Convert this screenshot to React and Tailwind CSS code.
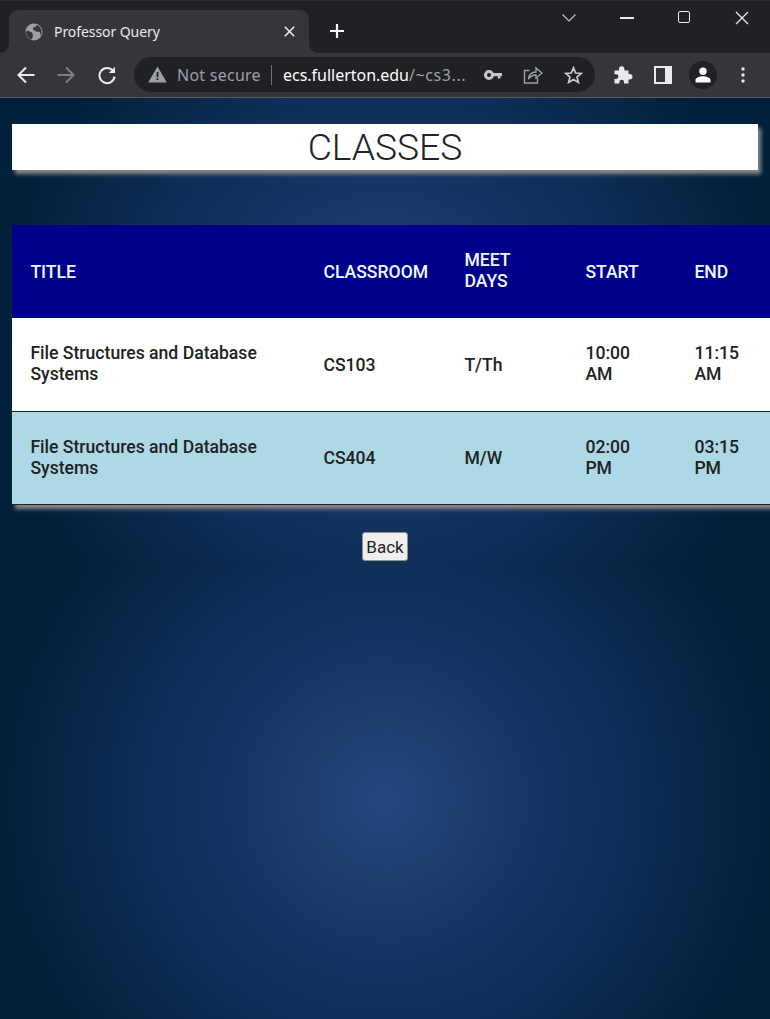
import React from "react";

const Globe = () => (
  <svg width="18" height="18" viewBox="0 0 18 18">
    <circle cx="9" cy="9" r="8.5" fill="#9aa0a6" />
    <path d="M2.5 7.5 L7 9.5 L8 12 L7 16.5 A8 8 0 0 1 1 9 Z M12 2 L9.5 4.5 L8 4.5 L8 6.5 L11 8.5 L15 9 L15.5 13 A8 8 0 0 0 16.5 7 A8 8 0 0 0 12 2 Z" fill="#35363a" />
  </svg>
);

const Arrow = ({ color, flip }) => (
  <svg width="20" height="20" viewBox="0 0 20 20" fill="none" stroke={color} strokeWidth="2.1" className={flip ? "rotate-180" : ""}>
    <path d="M18.5 10 H2.5 M10 2.5 L2.5 10 L10 17.5" />
  </svg>
);

const Reload = () => (
  <svg width="20" height="20" viewBox="0 0 20 20" fill="none">
    <path d="M16.2 6 A7.6 7.6 0 1 0 17.6 11.5" stroke="#e8eaed" strokeWidth="2" />
    <path d="M18 1.8 V8 H11.8 Z" fill="#e8eaed" />
  </svg>
);

const Warn = () => (
  <svg width="19" height="17" viewBox="0 0 19 17">
    <path d="M9.5 0.5 L18.8 16.5 H0.2 Z" fill="#9aa0a6" />
    <path d="M8.6 6 H10.4 V11 H8.6 Z M8.6 12.3 H10.4 V14.1 H8.6 Z" fill="#202124" />
  </svg>
);

const Key = () => (
  <svg width="18" height="10" viewBox="0 0 18 10">
    <path d="M5 0 A5 5 0 1 1 5 10 A5 5 0 0 1 5 0 Z M5 3 A2 2 0 1 0 5 7 A2 2 0 0 0 5 3 Z" fill="#c4c7c9" fillRule="evenodd" />
    <path d="M8 3 H18 V6.2 H16.4 V8.6 H13.8 V6.2 H8 Z" fill="#c4c7c9" />
  </svg>
);

const Share = () => (
  <svg width="20" height="20" viewBox="0 0 20 20" fill="none" stroke="#9aa0a6" strokeWidth="1.4">
    <path d="M6.5 5.5 H1.5 V18 H14.5 V13" />
    <path d="M5.5 14 C6 9 9 7 13 7 V3 L19 8 L13 13 V10 C10 10 7.5 11 5.5 14 Z" />
  </svg>
);

const Star = () => (
  <svg width="19" height="18" viewBox="0 0 19 18" fill="none" stroke="#c9cbce" strokeWidth="1.7">
    <path d="M9.5 1.8 L11.7 7 L17.3 7.4 L13 11 L14.4 16.4 L9.5 13.5 L4.6 16.4 L6 11 L1.7 7.4 L7.3 7 Z" />
  </svg>
);

const Puzzle = () => (
  <svg width="20" height="19" viewBox="0 0 20 19">
    <path d="M1.5 5.5 H6 V4 A2.7 2.7 0 0 1 11.4 4 V5.5 H15.5 V9 H16.8 A2.7 2.7 0 0 1 16.8 14.4 H15.5 V18.5 H11 V17 A2.3 2.3 0 0 0 6.4 17 V18.5 H1.5 V14 H3 A2.4 2.4 0 0 0 3 9.2 H1.5 Z" fill="#e8eaed" />
  </svg>
);

const SidePanel = () => (
  <svg width="18" height="18" viewBox="0 0 18 18">
    <path d="M0 0 H18 V18 H0 Z M2 2 V16 H11 V2 Z" fill="#e8eaed" fillRule="evenodd" />
  </svg>
);

const Person = () => (
  <svg width="16" height="16" viewBox="0 0 16 16">
    <circle cx="8" cy="4.2" r="3.7" fill="#fff" />
    <path d="M0.5 15.5 V13 C0.5 10.5 5 9.3 8 9.3 C11 9.3 15.5 10.5 15.5 13 V15.5 Z" fill="#fff" />
  </svg>
);

const Dots = () => (
  <svg width="4" height="16" viewBox="0 0 4 16">
    <circle cx="2" cy="2" r="1.7" fill="#e8eaed" />
    <circle cx="2" cy="8" r="1.7" fill="#e8eaed" />
    <circle cx="2" cy="14" r="1.7" fill="#e8eaed" />
  </svg>
);

const Cross = ({ size, color, width }) => (
  <svg width={size} height={size} viewBox="0 0 14 14" fill="none" stroke={color} strokeWidth={width}>
    <path d="M1 1 L13 13 M13 1 L1 13" />
  </svg>
);

const Flare = ({ right }) => (
  <svg width="9" height="9" viewBox="0 0 9 9" className={right ? "absolute bottom-0 -right-[9px] -scale-x-100" : "absolute bottom-0 -left-[9px]"}>
    <path d="M9 0 V9 H0 A9 9 0 0 0 9 0 Z" fill="#35363a" />
  </svg>
);

const TabStrip = () => (
  <div className="flex h-[53px] shrink-0 bg-[#202124] shadow-[inset_0_1px_0_#2c2d30]">
    <div className="relative ml-[9px] mt-[10px] flex h-[43px] w-[300px] items-center rounded-t-[9px] bg-[#35363a] pl-[16px] pr-[14px]">
      <Flare />
      <Flare right />
      <Globe />
      <span className="ml-[11px] text-[14px] tracking-[-0.07px] text-[#e8eaed] font-['Noto_Sans',sans-serif]">Professor Query</span>
      <span className="ml-auto flex"><Cross size={11} color="#e8eaed" width={2} /></span>
    </div>
    <div className="ml-[21px] mt-[24px] h-[14px] w-[14px] flex">
      <svg width="14" height="14" viewBox="0 0 14 14" fill="none" stroke="#fff" strokeWidth="2.2"><path d="M7 0 V14 M0 7 H14" /></svg>
    </div>
    <div className="ml-auto flex items-start">
      <div className="mt-[14px] flex">
        <svg width="14" height="8" viewBox="0 0 14 8" fill="none" stroke="#c4c7c9" strokeWidth="1.1"><path d="M0.5 0.5 L7 7 L13.5 0.5" /></svg>
      </div>
      <div className="ml-[44px] mt-[17px] h-[1.5px] w-[14px] bg-[#e8eaed]" />
      <div className="ml-[44px] mt-[11px] h-[12px] w-[12px] rounded-[2px] border border-[#e8eaed]" />
      <div className="ml-[45px] mr-[21px] mt-[11px] flex"><Cross size={14} color="#e8eaed" width={1.3} /></div>
    </div>
  </div>
);

const IconSlot = ({ children, w = "w-10" }) => (
  <div className={`flex h-full items-center justify-center ${w}`}>{children}</div>
);

const Toolbar = () => (
  <div className="flex h-[45px] shrink-0 items-center border-b border-b-[#5a5b5e] bg-[#35363a] pl-[6px] pb-[1px]">
    <IconSlot><Arrow color="#e8eaed" /></IconSlot>
    <IconSlot><Arrow color="#7c7e81" flip /></IconSlot>
    <div className="flex h-full w-10 items-center justify-center pl-[1px]"><Reload /></div>
    <div className="ml-[8px] flex h-[35px] w-[461px] items-center rounded-full bg-[#202124] pl-[14px] font-['Noto_Sans',sans-serif] text-[16px]">
      <Warn />
      <span className="ml-[10px] w-[84px] whitespace-nowrap tracking-[0.25px] text-[#9aa0a6]">Not secure</span>
      <span className="ml-[10px] h-[20px] w-px bg-[#6f7276]" />
      <span className="ml-[11px] w-[184px] whitespace-nowrap tracking-[-0.02px] text-white">
        ecs.fullerton.edu<span className="tracking-[0.6px] text-[#9aa0a6]">/~cs3...</span>
      </span>
      <div className="ml-[6px] flex h-full w-10 items-center justify-center"><Key /></div>
      <IconSlot><Share /></IconSlot>
      <IconSlot><Star /></IconSlot>
    </div>
    <div className="ml-[8px] flex h-full">
      <IconSlot><Puzzle /></IconSlot>
      <IconSlot><SidePanel /></IconSlot>
      <IconSlot>
        <div className="flex h-[28px] w-[28px] items-center justify-center rounded-full bg-[#202124]"><Person /></div>
      </IconSlot>
      <IconSlot><Dots /></IconSlot>
    </div>
  </div>
);

const rows = [
  { title: "File Structures and Database Systems", room: "CS103", days: "T/Th", start: ["10:00", "AM"], end: ["11:15", "AM"], bg: "bg-white" },
  { title: "File Structures and Database Systems", room: "CS404", days: "M/W", start: ["02:00", "PM"], end: ["03:15", "PM"], bg: "bg-[#add8e6]" },
];

const th = "px-[18.4px] pt-[2px] h-[93px] text-left align-middle text-[17.6px] leading-[21px] font-medium text-[#f0f8ff]";
const thUp = "px-[18.4px] pb-[1px] h-[93px] text-left align-middle text-[17.6px] leading-[21px] font-medium text-[#f0f8ff]";
const td = "px-[18.4px] h-[93px] text-left align-middle text-[17.6px] leading-[21px] font-medium text-[#222]";
const tdOne = "px-[18.4px] pt-[2px] h-[93px] text-left align-middle text-[17.6px] leading-[21px] font-medium text-[#222]";

const Page = () => (
  <div className="flex-1 overflow-hidden bg-[radial-gradient(circle_385px_at_center,#24487f_0%,#1b3e6e_22%,#133563_42%,#0e2f58_62%,#072848_82%,#00203b_100%)] bg-[length:770px_468px] px-[12px] pt-[26px] font-['Roboto',sans-serif]">
    <h1 className="h-[46px] w-[746px] bg-white text-center text-[37.2px] leading-[46px] font-light text-[#222] shadow-[3px_4px_4px_#8a8a8a]">CLASSES</h1>
    <div className="mt-[55px] w-[772px] shadow-[3px_4px_4px_#8a8a8a]">
      <table className="w-[772px] table-fixed border-collapse">
        <colgroup>
          <col className="w-[293px]" />
          <col className="w-[141px]" />
          <col className="w-[121px]" />
          <col className="w-[109px]" />
          <col className="w-[108px]" />
        </colgroup>
        <thead>
          <tr className="bg-[#00008b]">
            <th className={th}>TITLE</th>
            <th className={th}>CLASSROOM</th>
            <th className={thUp}>MEET DAYS</th>
            <th className={th}>START</th>
            <th className={th}>END</th>
          </tr>
        </thead>
        <tbody>
          {rows.map((r) => (
            <tr key={r.room} className={`${r.bg} border-b border-b-[#222]`}>
              <td className={td}>{r.title}</td>
              <td className={tdOne}>{r.room}</td>
              <td className={tdOne}>{r.days}</td>
              <td className={td}>{r.start[0]}<br />{r.start[1]}</td>
              <td className={td}>{r.end[0]}<br />{r.end[1]}</td>
            </tr>
          ))}
        </tbody>
      </table>
    </div>
    <div className="mt-[27px] flex w-[746px] justify-center">
      <button className="h-[29px] w-[46px] rounded-[3px] border border-[#8f8f8f] bg-[#efefef] pt-[3px] text-center text-[17px] leading-[21px] text-[#222]">Back</button>
    </div>
  </div>
);

export default function App() {
  return (
    <div className="flex h-[1019px] w-[770px] flex-col overflow-hidden">
      <TabStrip />
      <Toolbar />
      <Page />
    </div>
  );
}
